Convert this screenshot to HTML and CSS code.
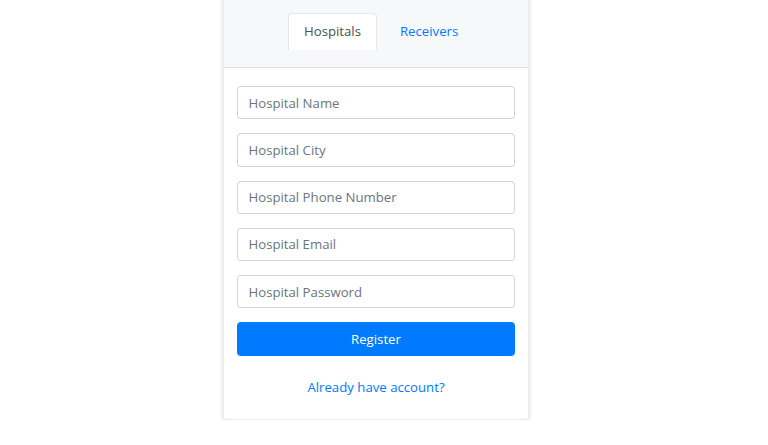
FILE: index.html
```html
<!DOCTYPE html>
<html lang="en">
<head>
<meta charset="utf-8">
<title>Register</title>
<link rel="stylesheet" href="styles.css">
</head>
<body>
<div class="page">
  <div class="card">
    <div class="card-header">
      <ul class="tabs">
        <li class="tab active">Hospitals</li>
        <li class="tab">Receivers</li>
      </ul>
    </div>
    <form class="card-body">
      <input class="field" type="text" placeholder="Hospital Name">
      <input class="field" type="text" placeholder="Hospital City">
      <input class="field" type="text" placeholder="Hospital Phone Number">
      <input class="field" type="email" placeholder="Hospital Email">
      <input class="field" type="password" placeholder="Hospital Password">
      <button class="btn" type="button">Register</button>
      <a class="login-link" href="#">Already have account?</a>
    </form>
  </div>
</div>
</body>
</html>
```
FILE: styles.css
```css
* { box-sizing: border-box; }
html, body { margin: 0; padding: 0; background: #fff; }
body {
  font-family: "Open Sans", "Noto Sans", "Liberation Sans", sans-serif;
  font-size: 13.2px;
  line-height: 21px;
  color: #212529;
}
.page {
  padding-left: 223px;
}
.card {
  width: 306px;
  margin-top: -4px;
  background: #fff;
  border: 1px solid rgba(0,0,0,0.08);
  border-radius: 3px;
  box-shadow: 0 1px 5px rgba(0,0,0,0.15);
  overflow: hidden;
}
.card-header {
  background: #f7f8f9;
  border-bottom: 1px solid #dfe3e7;
  padding: 16px 0 17px 64px;
}
.tabs {
  list-style: none;
  margin: 0;
  padding: 0;
  display: flex;
  gap: 7px;
}
.tab {
  padding: 7px 15px 8px;
  border: 1px solid transparent;
  border-bottom: 0;
  border-radius: 4px 4px 0 0;
  color: #007bff;
}
.tab.active {
  background: #fff;
  border-color: #e3e6ea;
  color: #495057;
}
.card-body {
  padding: 18px 13px 21px;
  display: flex;
  flex-direction: column;
}
.field {
  display: block;
  width: 100%;
  height: 33.25px;
  margin: 0 0 14px;
  padding: 5px 10.5px;
  font: inherit;
  color: #495057;
  background: #fff;
  border: 1px solid #ced4da;
  border-radius: 3.5px;
  outline: none;
}
.field::placeholder { color: #6c757d; opacity: 1; }
.btn {
  display: block;
  width: 100%;
  height: 33.5px;
  margin: 0;
  padding: 0;
  font: inherit;
  color: #fff;
  background: #007bff;
  border: 1px solid #007bff;
  border-radius: 3.5px;
}
.login-link {
  display: block;
  margin-top: 21px;
  text-align: center;
  color: #007bff;
  text-decoration: none;
}
```
